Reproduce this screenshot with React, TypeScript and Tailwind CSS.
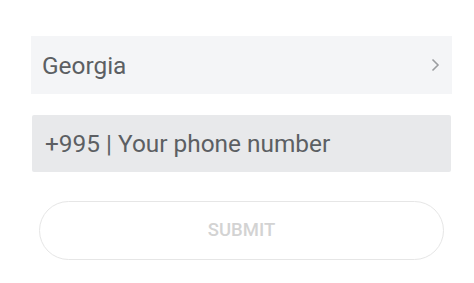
import React from "react";

export default function App() {
  return (
    <div className="w-[474px] h-[283px] bg-white pt-[36px] pl-[31px]" style={{ fontFamily: "Roboto, 'Liberation Sans', sans-serif" }}>
      <div className="w-[421px] h-[58px] bg-[#f4f5f7] flex items-center justify-between pl-[11px] pr-[12px]">
        <span className="text-[24.4px] leading-none text-[#5c5f63] pt-[2px]">Georgia</span>
        <svg width="9" height="14" viewBox="0 0 9 14" fill="none">
          <path d="M1.5 1.5 L7 7 L1.5 12.5" stroke="#9b9da0" strokeWidth="1.6" />
        </svg>
      </div>
      <div className="ml-[1px] mt-[21px] w-[419px] h-[57px] bg-[#e8e9eb] rounded-[2px] flex items-center pl-[13px]">
        <span className="text-[24.4px] leading-none text-[#5c5f63] pt-[1px]">+995 | Your phone number</span>
      </div>
      <div className="ml-[8px] mt-[29px] w-[405px] h-[59px] rounded-full border border-[#e6e6e6] flex items-center justify-center">
        <span className="text-[18.5px] font-medium leading-none text-[#d3d3d3]">SUBMIT</span>
      </div>
    </div>
  );
}
